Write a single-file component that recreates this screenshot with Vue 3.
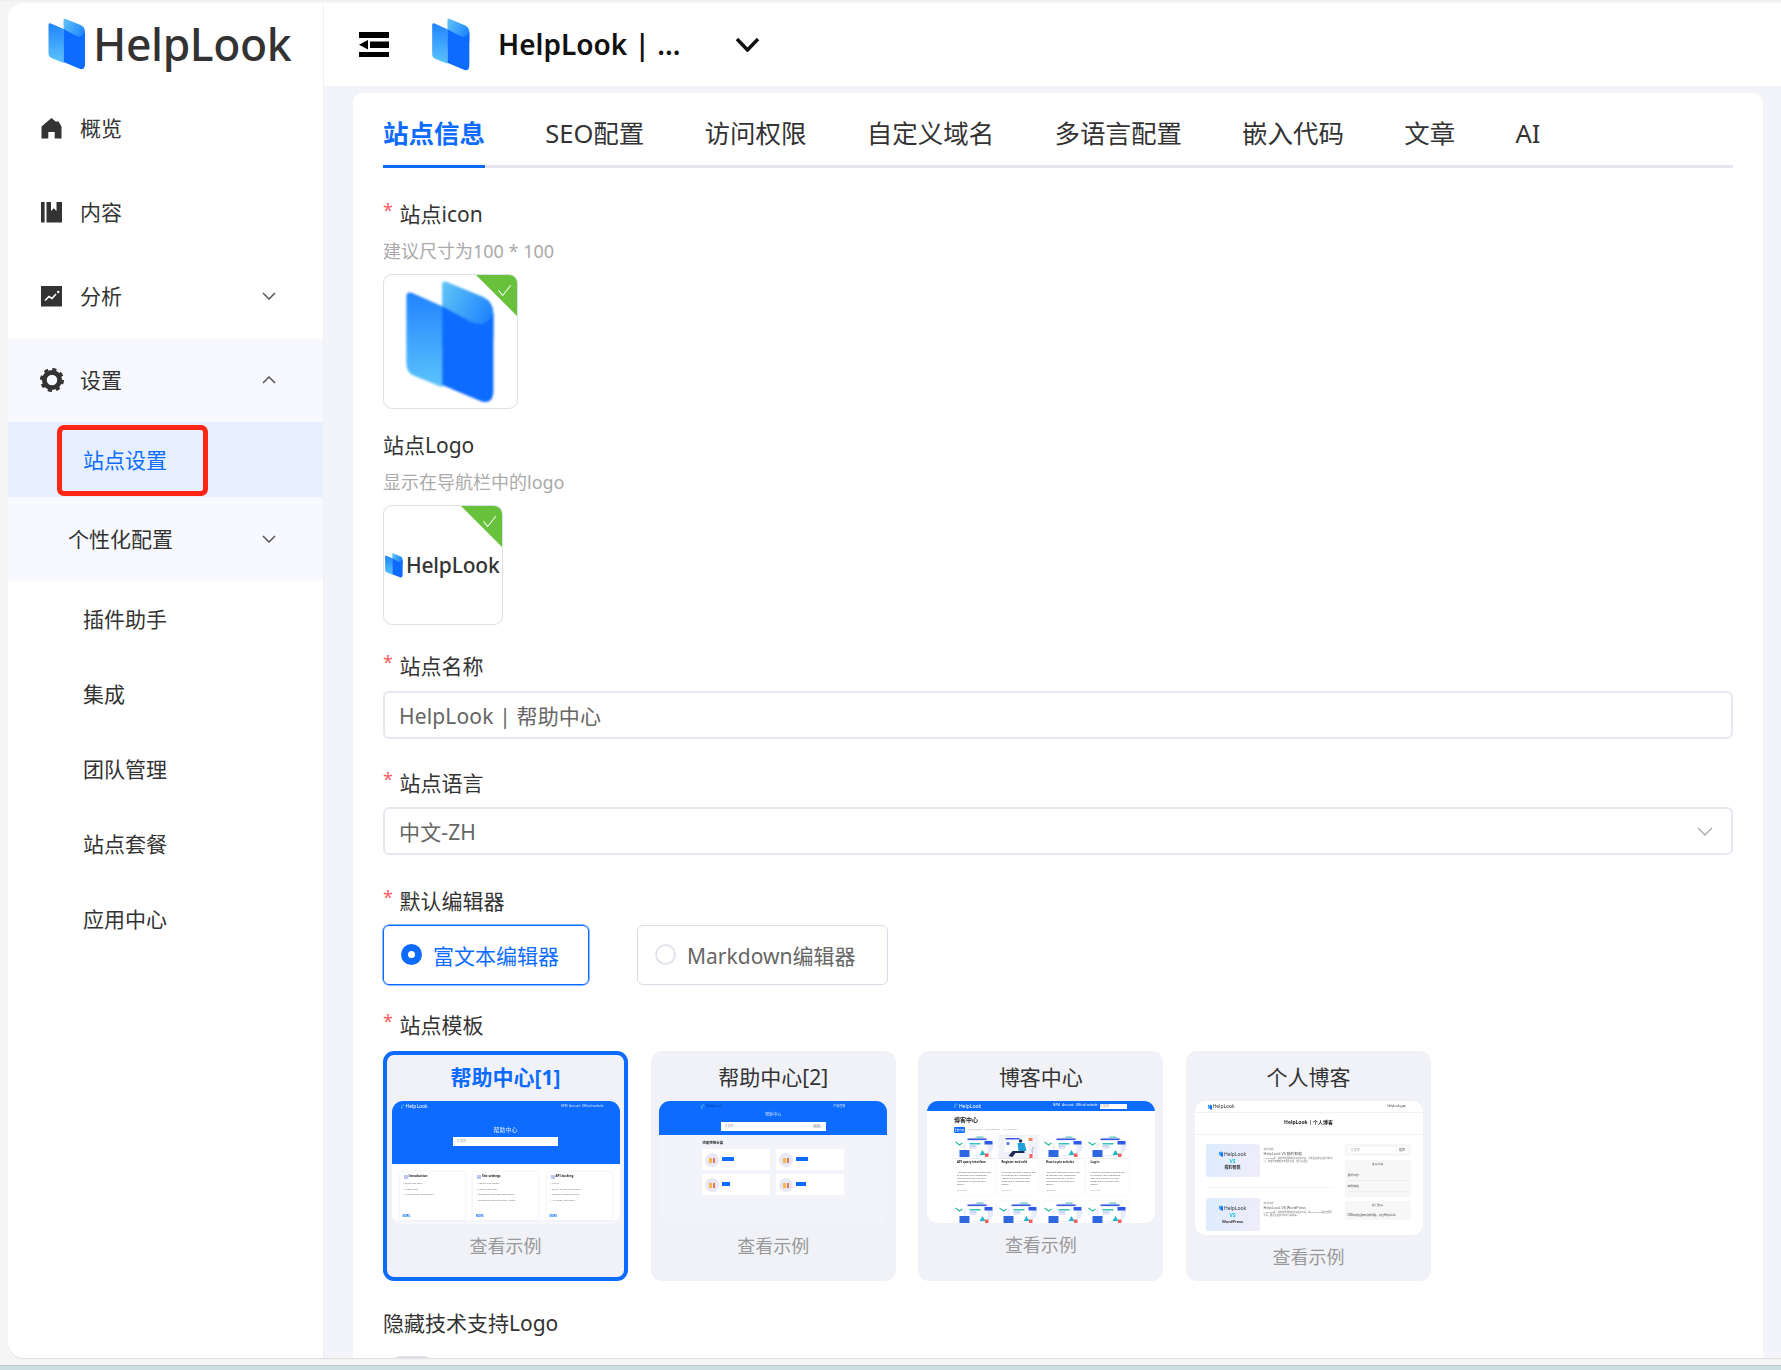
<template>
  <div class="page">
    <!-- shared logo mark -->
    <svg class="defs" width="0" height="0">
      <defs>
        <linearGradient id="hl-back" x1="0" y1="0" x2="1" y2="0.6">
          <stop offset="0" stop-color="#62c6f5" />
          <stop offset="1" stop-color="#1a80ff" />
        </linearGradient>
        <linearGradient id="hl-left" x1="0" y1="0" x2="0" y2="1">
          <stop offset="0" stop-color="#2183ff" />
          <stop offset="1" stop-color="#5cc4fa" />
        </linearGradient>
        <symbol id="hl-mark" viewBox="0 0 37 52">
          <path d="M15 2Q15 0 17.5 1L32 7Q36.500 9 36.500 14V24L15 28Z" fill="url(#hl-back)" />
          <path d="M0 7Q0 4.500 2.500 5.500L15 11V45L3 40Q0 38.800 0 35Z" fill="url(#hl-left)" />
          <path d="M15 11L26 17Q33 21 36.500 14V46Q36.500 53 30.500 50.500L15 44Z" fill="#0d6cff" />
        </symbol>
      </defs>
    </svg>

    <div class="window">
      <div class="app">
        <aside class="sidebar">
          <div class="brand">
            <svg class="brand-mark"><use href="#hl-mark" /></svg>
            <span class="brand-name">HelpLook</span>
          </div>

          <nav>
            <div class="menu-row">
              <svg class="menu-icon" viewBox="0 0 21 21"><path d="M10.500 0L14.500 3.600H17.500L20.500 8.500V20.500H13.700V14H7.300V20.500H.5V8.500Z" fill="#333" /></svg>
              <span>概览</span>
            </div>
            <div class="menu-row">
              <svg class="menu-icon" viewBox="0 0 21 21"><path d="M0 0H3.600V20.500H0ZM5.500 0H10V9L12.800 6.300L15.500 9V0H21V20.500H5.500Z" fill="#333" /></svg>
              <span>内容</span>
            </div>
            <div class="menu-row">
              <svg class="menu-icon" viewBox="0 0 21 21">
                <rect width="21" height="20.500" fill="#333" />
                <path d="M4 14.500L8 10.500L11 12.500L15 8" fill="none" stroke="#fff" stroke-width="1.600" />
                <circle cx="17.200" cy="6" r="1.200" fill="#fff" />
              </svg>
              <span>分析</span>
              <svg class="chevron" viewBox="0 0 14 8"><path d="M1 1L7 7L13 1" /></svg>
            </div>

            <div class="menu-open">
              <div class="menu-row">
                <svg class="menu-icon gear" viewBox="0 0 24 24">
                  <circle cx="12" cy="12" r="7.700" fill="none" stroke="#333" stroke-width="4.800" />
                  <circle cx="12" cy="12" r="10.700" fill="none" stroke="#333" stroke-width="2.600" stroke-dasharray="4.200 4.200" />
                </svg>
                <span>设置</span>
                <svg class="chevron" viewBox="0 0 14 8"><path d="M1 7L7 1L13 7" /></svg>
              </div>
              <div class="sub-row sub-active">
                站点设置
                <div class="annotation"></div>
              </div>
              <div class="menu-row sub-group">
                <span>个性化配置</span>
                <svg class="chevron" viewBox="0 0 14 8"><path d="M1 1L7 7L13 1" /></svg>
              </div>
            </div>

            <div v-for="item in subItems" :key="item" class="sub-row">{{ item }}</div>
          </nav>
        </aside>

        <div class="main">
          <header class="topbar">
            <svg class="hamburger" viewBox="0 0 30 25">
              <path d="M0 0H30V6H0ZM0 20H30V25H0ZM11 9.500H30V16H11ZM0 12.700L9 8V17.500Z" fill="#000" />
            </svg>
            <svg class="top-mark"><use href="#hl-mark" /></svg>
            <span class="site-title">HelpLook | ...</span>
            <svg class="site-chevron" viewBox="0 0 25 15"><path d="M2 2L12.500 13L23 2" /></svg>
          </header>

          <div class="content">
            <section class="card">
              <div class="tabs">
                <div
                  v-for="tab in tabs"
                  :key="tab"
                  class="tab"
                  :class="{ active: activeTab === tab }"
                  @click="activeTab = tab"
                >{{ tab }}</div>
              </div>

              <div class="field f-icon">
                <div class="label"><span class="req">*</span>站点icon</div>
                <div class="hint">建议尺寸为100 * 100</div>
                <div class="upload upload-icon">
                  <svg class="upload-mark"><use href="#hl-mark" /></svg>
                  <svg class="corner" viewBox="0 0 42 42">
                    <polygon points="0,0 42,0 42,42" fill="#67c13b" />
                    <polyline points="23,16 27,21 35,11" fill="none" stroke="#fff" stroke-width="1" />
                  </svg>
                </div>
              </div>

              <div class="field f-logo">
                <div class="label">站点Logo</div>
                <div class="hint">显示在导航栏中的logo</div>
                <div class="upload upload-logo">
                  <div class="logo-preview">
                    <svg class="logo-preview-mark"><use href="#hl-mark" /></svg>
                    <span>HelpLook</span>
                  </div>
                  <svg class="corner" viewBox="0 0 42 42">
                    <polygon points="0,0 42,0 42,42" fill="#67c13b" />
                    <polyline points="23,16 27,21 35,11" fill="none" stroke="#fff" stroke-width="1" />
                  </svg>
                </div>
              </div>

              <div class="field f-name">
                <div class="label gap-s"><span class="req">*</span>站点名称</div>
                <input v-model="siteName" class="text-input" type="text" />
              </div>

              <div class="field f-lang">
                <div class="label gap-xs"><span class="req">*</span>站点语言</div>
                <div class="text-input select">
                  <span>中文-ZH</span>
                  <svg viewBox="0 0 16 9"><path d="M1 1L8 8L15 1" /></svg>
                </div>
              </div>

              <div class="field f-editor">
                <div class="label gap-xs"><span class="req">*</span>默认编辑器</div>
                <div class="radios">
                  <div
                    v-for="ed in editors"
                    :key="ed.name"
                    class="radio"
                    :class="{ checked: editor === ed.name }"
                    :style="{ width: ed.width }"
                    @click="editor = ed.name"
                  >
                    <span class="dot"></span>
                    <span>{{ ed.name }}</span>
                  </div>
                </div>
              </div>

              <div class="field f-tpl">
                <div class="label gap"><span class="req">*</span>站点模板</div>
                <div class="templates">
                  <div
                    v-for="tpl in templates"
                    :key="tpl.name"
                    class="tpl"
                    :class="{ selected: template === tpl.name }"
                    @click="template = tpl.name"
                  >
                    <div class="tpl-title">{{ tpl.name }}</div>

                    <!-- 帮助中心[1] -->
                    <div v-if="tpl.kind === 'help1'" class="pv pv1">
                      <div class="pv1-hero">
                        <div class="pv-nav">
                          <span class="pv-brand white"><svg><use href="#hl-mark" /></svg>HelpLook</span>
                          <span class="pv-links">NPM&nbsp;&nbsp;Account&nbsp;&nbsp;Official website</span>
                        </div>
                        <div class="pv-hero-title">帮助中心</div>
                        <div class="pv-search">Q 搜索</div>
                      </div>
                      <div class="pv1-cards">
                        <div v-for="c in helpCards" :key="c.title" class="pv1-card">
                          <div class="pv1-card-title"><i></i>{{ c.title }}</div>
                          <div v-for="line in c.lines" :key="line" class="pv1-line">• {{ line }}</div>
                          <div class="pv1-more"><b>MORE</b> ›</div>
                        </div>
                      </div>
                    </div>

                    <!-- 帮助中心[2] -->
                    <div v-else-if="tpl.kind === 'help2'" class="pv pv2">
                      <div class="pv2-hero">
                        <div class="pv-nav pv2-nav">
                          <span class="pv-brand dark"><svg><use href="#hl-mark" /></svg>HelpLook</span>
                          <span class="pv-links">产品官网</span>
                        </div>
                        <div class="pv2-title">帮助中心</div>
                        <div class="pv-search pv2-search"><span>Q 搜索</span><em>搜索</em></div>
                      </div>
                      <div class="pv2-body">
                        <div class="pv2-head">功能特性分类</div>
                        <div class="pv2-grid">
                          <div v-for="(chip, i) in helpChips" :key="i" class="pv2-item">
                            <span class="pv2-circle"><i></i><i></i></span>
                            <span class="pv2-chip" :style="{ width: chip }"></span>
                          </div>
                        </div>
                      </div>
                    </div>

                    <!-- 博客中心 -->
                    <div v-else-if="tpl.kind === 'blog'" class="pv pv3">
                      <div class="pv3-nav">
                        <span class="pv-brand white"><svg><use href="#hl-mark" /></svg>HelpLook</span>
                        <span class="pv-links">NPM&nbsp;&nbsp;&nbsp;Account&nbsp;&nbsp;&nbsp;Official website</span>
                        <span class="pv3-search">Q 搜索</span>
                      </div>
                      <div class="pv3-title">博客中心</div>
                      <div class="pv3-chips"><b>全部内容</b><span>Introduction</span><span>Site settings</span><span>API docking</span></div>
                      <div class="pv3-grid">
                        <div v-for="post in blogPosts" :key="post.id" class="pv3-post">
                          <svg v-if="post.person" class="pv3-art" viewBox="0 0 40 24">
                            <rect width="40" height="24" fill="#f1f2f9" />
                            <rect x="6" y="2" width="24" height="15" fill="#fff" />
                            <rect x="7" y="3" width="14" height="1.500" fill="#3a55e0" />
                            <rect x="8" y="7" width="3" height="3" fill="#5f7fe8" />
                            <rect x="30" y="3" width="4" height="3" fill="#f58a6a" />
                            <circle cx="22" cy="6" r="1.800" fill="#26324f" />
                            <path d="M19 8H26L28 16H20Z" fill="#1f9fd8" />
                            <path d="M10 21L14 16H26V18H17L14 22Z" fill="#1d2a52" />
                            <rect x="31" y="19" width="3" height="4" fill="#f0605a" />
                            <path d="M34 19V12M34 15L36 12M34 17L32 14" stroke="#b9c3dc" stroke-width=".8" fill="none" />
                            <rect y="23.500" width="40" height=".5" fill="#ddd" />
                          </svg>
                          <svg v-else class="pv3-art" viewBox="0 0 40 24">
                            <ellipse cx="24" cy="11.500" rx="15" ry="10" fill="#e8ebfb" />
                            <rect x="11" y="5" width="22" height="15" fill="#fff" />
                            <rect x="13" y="3.500" width="19" height="1.600" fill="#3a55e0" />
                            <rect x="22" y="1.500" width="7" height="1.200" fill="#5ccdb5" />
                            <rect x="30" y="6" width="8" height="3.500" fill="#2b59e8" />
                            <rect x="15" y="8" width="11" height="1.500" fill="#35c4b5" />
                            <rect x="15" y="10.500" width="7" height="1" fill="#9db0ee" />
                            <rect x="15" y="12.500" width="7" height="1" fill="#c5cdf2" />
                            <rect x="5" y="15" width="10" height="7" fill="#2f67e0" />
                            <path d="M1 7L5 10L8 8" fill="none" stroke="#2bbfa0" stroke-width="1.200" />
                            <path d="M25 20L28 15L31 20Z" fill="#22b8c8" />
                            <rect x="30.500" y="18.500" width="3.500" height="3.500" fill="#f0605a" />
                            <rect y="23.500" width="40" height=".5" fill="#ddd" />
                          </svg>
                          <template v-if="post.title">
                            <div class="pv3-post-title">{{ post.title }}</div>
                            <div class="pv3-post-text">{{ post.text }}</div>
                            <div class="pv3-post-foot">Read more</div>
                          </template>
                        </div>
                      </div>
                    </div>

                    <!-- 个人博客 -->
                    <div v-else class="pv pv4">
                      <div class="pv4-nav">
                        <span class="pv-brand dark"><svg><use href="#hl-mark" /></svg>HelpLook</span>
                        <span class="pv4-link">HelpLook官网</span>
                      </div>
                      <div class="pv4-title">HelpLook | 个人博客</div>
                      <div class="pv4-body">
                        <div class="pv4-list">
                          <div v-for="a in articles" :key="a.title" class="pv4-article">
                            <div class="pv4-cover">
                              <span class="pv-brand dark"><svg><use href="#hl-mark" /></svg>HelpLook</span>
                              <b>VS</b>
                              <span class="pv4-rival">{{ a.rival }}</span>
                            </div>
                            <div class="pv4-text">
                              <small>最新动态</small>
                              <strong>{{ a.title }}</strong>
                              <p>{{ a.text }}</p>
                            </div>
                          </div>
                        </div>
                        <div class="pv4-side">
                          <div class="pv4-box pv4-searchbox"><span>Q 搜索</span><em>搜索</em></div>
                          <div class="pv4-box pv4-cats">
                            <div class="pv4-box-title">文章分类</div>
                            <div class="pv4-row">最新动态</div>
                            <div class="pv4-row">使用教程</div>
                          </div>
                          <div class="pv4-box">
                            <div class="pv4-box-title">热门文章</div>
                            <div class="pv4-hot">CMS系统搭建知识库网站，对比HelpLook</div>
                          </div>
                        </div>
                      </div>
                    </div>

                    <div class="tpl-link">查看示例</div>
                  </div>
                </div>
              </div>

              <div class="field f-hide">
                <div class="label">隐藏技术支持Logo</div>
                <div class="switch"></div>
              </div>
            </section>
          </div>
        </div>
      </div>
    </div>
  </div>
</template>

<script setup>
import { ref } from 'vue';

const tabs = ['站点信息', 'SEO配置', '访问权限', '自定义域名', '多语言配置', '嵌入代码', '文章', 'AI'];
const activeTab = ref('站点信息');

const subItems = ['插件助手', '集成', '团队管理', '站点套餐', '应用中心'];

const siteName = ref('HelpLook | 帮助中心');

const editors = [
  { name: '富文本编辑器', width: '206px' },
  { name: 'Markdown编辑器', width: '251px' },
];
const editor = ref('富文本编辑器');

const templates = [
  { name: '帮助中心[1]', kind: 'help1' },
  { name: '帮助中心[2]', kind: 'help2' },
  { name: '博客中心', kind: 'blog' },
  { name: '个人博客', kind: 'personal' },
];
const template = ref('帮助中心[1]');

const helpCards = [
  { title: 'Introduction', lines: ['Quick get start', 'Create Site', 'Viewing Site information'] },
  { title: 'Site settings', lines: ['Modify the theme', 'Modify site icon', 'Configure the SEO information', 'Configure social sidebar / more'] },
  { title: 'API docking', lines: ['Log in', 'Query article list & more', 'Register article & more', 'API query interface'] },
];

const helpChips = ['12px', '12px', '8px', '10px'];

const bodyText = 'HelpLook provides a simple way to manage your knowledge base and publish it to your customers in minutes with search.';
// second row of the grid is cut off by the thumbnail, only its pictures show
const blogPosts = [
  { id: 1, title: 'API query interface', text: bodyText },
  { id: 2, title: 'Register and edit', text: bodyText, person: true },
  { id: 3, title: 'How to pin articles', text: bodyText },
  { id: 4, title: 'Log in', text: bodyText },
  { id: 5 },
  { id: 6 },
  { id: 7 },
  { id: 8 },
];

const articles = [
  {
    title: 'HelpLook VS 猎豹智能',
    rival: '猎豹智能',
    text: 'HelpLook是一款简单易用的知识库搭建工具，帮助企业快速搭建帮助中心，和猎豹智能相比有更多模板，支持多语言。',
  },
  {
    title: 'HelpLook VS WordPress',
    rival: 'WordPress',
    text: 'HelpLook是一款简单易用的知识库搭建工具，和WordPress相比无需写代码，更适合搭建帮助中心和博客。',
  },
];
</script>

<style scoped>
.page {
  width: 1781px;
  height: 1370px;
  background: #cfdde4;
  overflow: hidden;
  font-family: "Noto Sans", "Noto Sans CJK SC", sans-serif;
  color: #333;
}

.defs {
  position: absolute;
}

.window {
  height: 1366px;
  box-sizing: border-box;
  padding: 2px 0 7px 8px;
  background: #f5f5f5;
  border-top: 1px solid #eee;
  border-bottom: 1px solid #b9c7cf;
}

.app {
  display: flex;
  height: 100%;
  background: #fff;
  border-radius: 16px 0 0 16px;
  overflow: hidden;
  box-shadow: 0 1px 1px #ddd;
}

/* sidebar */
.sidebar {
  width: 316px;
  flex-shrink: 0;
  border-right: 1px solid #f1f1f4;
  box-sizing: border-box;
  background: #fff;
}

.brand {
  height: 83px;
  display: flex;
  align-items: center;
  padding-left: 40px;
  gap: 7px;
}

.brand-mark {
  width: 38px;
  height: 52px;
  margin-top: -2px;
}

.brand-name {
  font-size: 44.500px;
  font-weight: 500;
  letter-spacing: -0.4px;
  color: #333;
  margin-top: -2px;
}

.menu-row {
  height: 84px;
  display: flex;
  align-items: center;
  padding: 0 47px 0 33px;
  font-size: 21px;
}

.menu-row span {
  margin-bottom: 2px;
}

.menu-icon {
  width: 21px;
  height: 21px;
  margin-right: 18px;
  flex-shrink: 0;
}

.menu-icon.gear {
  width: 24px;
  height: 24px;
  margin: 0 16.500px 0 -1.500px;
}

.chevron {
  width: 14px;
  height: 8px;
  margin-left: auto;
}

.chevron path {
  fill: none;
  stroke: #555;
  stroke-width: 1.5;
}

.menu-open {
  background: #f8f9fe;
}

.sub-group {
  padding-left: 60px;
}

.sub-row {
  height: 75px;
  box-sizing: border-box;
  display: flex;
  align-items: center;
  padding: 0 0 2px 75px;
  font-size: 21px;
  position: relative;
}

.sub-active {
  background: #e6effd;
  color: #0d6cff;
}

.annotation {
  position: absolute;
  left: 49px;
  top: 3px;
  width: 151px;
  height: 71px;
  box-sizing: border-box;
  border: 5px solid #ff2416;
  border-radius: 7px;
}

/* top bar */
.main {
  flex: 1;
  min-width: 0;
  display: flex;
  flex-direction: column;
  background: #f3f4f9;
}

.topbar {
  height: 83px;
  flex-shrink: 0;
  display: flex;
  align-items: center;
  padding-left: 35px;
  background: #fff;
}

.hamburger {
  width: 30px;
  height: 25px;
  margin-right: 43px;
}

.top-mark {
  width: 38px;
  height: 53px;
  margin-right: 28px;
}

.site-title {
  width: 237px;
  font-size: 28px;
  font-weight: 600;
  color: #111;
  margin-bottom: 2px;
}

.site-chevron {
  width: 25px;
  height: 15px;
}

.site-chevron path {
  fill: none;
  stroke: #111;
  stroke-width: 3.5;
}

/* card */
.content {
  flex: 1;
  min-height: 0;
  padding: 7px 18px 0 29px;
}

.card {
  height: 100%;
  box-sizing: border-box;
  padding: 0 30px;
  background: #fff;
  border-radius: 10px 10px 0 0;
  overflow: hidden;
}

.tabs {
  display: flex;
  gap: 60.200px;
  border-bottom: 3px solid #e3e6ef;
}

.tab {
  padding-top: 10px;
  margin-bottom: -3px;
  border-bottom: 3px solid transparent;
  height: 62px;
  line-height: 61px;
  font-size: 25.500px;
  cursor: pointer;
}

.tab.active {
  color: #0d6cff;
  font-weight: 700;
  border-bottom-color: #0d6cff;
}

/* form */
.label {
  display: flex;
  height: 30px;
  line-height: 30px;
  font-size: 21px;
  color: #333;
}

.label.gap {
  margin-bottom: 11px;
}

.label.gap-s {
  margin-bottom: 10px;
}

.label.gap-xs {
  margin-bottom: 9px;
}

.req {
  width: 16.500px;
  color: #ff5d5d;
  font-size: 18px;
  line-height: 22px;
}

.hint {
  height: 45px;
  line-height: 44px;
  font-size: 18px;
  color: #aaa;
}

.f-icon {
  margin-top: 31px;
}

.f-logo {
  margin-top: 21px;
}

.f-name {
  margin-top: 26px;
}

.f-lang {
  margin-top: 29px;
}

.f-editor {
  margin-top: 31px;
}

.f-tpl {
  margin-top: 25px;
}

.f-hide {
  margin-top: 27px;
}

.upload {
  position: relative;
  box-sizing: border-box;
  border: 1px solid #dcdfe8;
  border-radius: 9px;
  overflow: hidden;
}

.upload-icon {
  width: 135px;
  height: 135px;
  display: flex;
  align-items: center;
  justify-content: center;
}

.upload-mark {
  width: 89px;
  height: 124px;
  filter: blur(1px);
}

.upload-logo {
  width: 120px;
  height: 120px;
  display: flex;
  align-items: center;
}

.logo-preview {
  display: flex;
  align-items: center;
  gap: 3px;
  padding-left: 1px;
  font-size: 21px;
  font-weight: 500;
  letter-spacing: -0.2px;
  color: #333;
  white-space: nowrap;
}

.logo-preview-mark {
  width: 18px;
  height: 25px;
}

.corner {
  position: absolute;
  top: -1px;
  right: -1px;
  width: 43px;
  height: 43px;
}

.text-input {
  display: block;
  width: 100%;
  height: 48px;
  box-sizing: border-box;
  border: 2px solid #e6e8f0;
  border-radius: 6px;
  padding: 0 14px;
  font-family: inherit;
  font-size: 21px;
  letter-spacing: 0.150px;
  color: #666;
  background: #fff;
  outline: none;
}

.select {
  display: flex;
  align-items: center;
  justify-content: space-between;
}

.select svg {
  width: 16px;
  height: 9px;
  margin-right: 4px;
}

.select path {
  fill: none;
  stroke: #aaa;
  stroke-width: 1.4;
}

.radios {
  display: flex;
  gap: 48px;
}

.radio {
  height: 60px;
  box-sizing: border-box;
  display: flex;
  align-items: center;
  gap: 11px;
  padding-left: 17px;
  padding-bottom: 1px;
  border: 1px solid #d9dce6;
  border-radius: 6px;
  font-size: 21px;
  color: #666;
  cursor: pointer;
}

.radio.checked {
  border-color: #0d6cff;
  box-shadow: 0 0 0 0.5px #0d6cff;
  color: #0d6cff;
}

.dot {
  width: 21px;
  height: 21px;
  box-sizing: border-box;
  border: 2px solid #e2e4ec;
  border-radius: 50%;
  background: #fff;
}

.radio.checked .dot {
  border: 7px solid #0d6cff;
}

/* template cards */
.templates {
  display: flex;
  gap: 22.700px;
}

.tpl {
  width: 245px;
  height: 230px;
  box-sizing: border-box;
  border: 4px solid #f0f2f7;
  border-radius: 11px;
  background: #f0f2f7;
  cursor: pointer;
}

.tpl.selected {
  border-color: #0d6cff;
}

.tpl-title {
  height: 46px;
  line-height: 44px;
  text-align: center;
  font-size: 21px;
  color: #333;
}

.tpl.selected .tpl-title {
  color: #0d6cff;
  font-weight: 700;
}

.tpl-link {
  height: 44px;
  line-height: 44px;
  text-align: center;
  font-size: 18px;
  color: #999;
}

.switch {
  width: 46px;
  height: 24px;
  margin: 18px 0 0 6px;
  border-radius: 12px;
  background: #dcdfe6;
}

/* template thumbnails */
.pv {
  width: 228px;
  margin: 0 auto;
  border-radius: 11px;
  overflow: hidden;
  font-size: 3px;
  line-height: 1.3;
  white-space: nowrap;
  color: #555;
  filter: blur(0.3px);
}

.pv-brand {
  display: inline-flex;
  align-items: center;
  gap: 1px;
  font-size: 5px;
}

.pv-brand svg {
  width: 4px;
  height: 6px;
}

.pv-brand.white {
  color: #fff;
}

.pv-brand.dark {
  color: #333;
}

.pv-links {
  color: #d6e4ff;
  font-size: 3px;
}

.pv-nav {
  display: flex;
  justify-content: space-between;
  align-items: center;
  height: 11px;
  padding: 0 16px 0 9px;
}

.pv-search {
  width: 105px;
  height: 9px;
  margin: 0 auto;
  padding-left: 4px;
  box-sizing: border-box;
  background: #fff;
  line-height: 9px;
  color: #aaa;
}

.pv-hero-title {
  margin-top: 13px;
  margin-bottom: 2px;
  text-align: center;
  font-size: 6px;
  line-height: 10px;
  color: #d8e6ff;
}

.pv1 {
  height: 123px;
  background: #f6f8fc;
}

.pv1-hero {
  height: 63px;
  background: #0d6cff;
}

.pv1-cards {
  display: flex;
  justify-content: space-between;
  height: 60px;
  box-sizing: border-box;
  padding: 8px 8px 0;
  background: linear-gradient(#fff 56px, #f6f8fc 56px);
}

.pv1-card {
  position: relative;
  width: 65px;
  height: 48px;
  padding: 3px 4px;
  box-sizing: border-box;
  background: #fff;
  box-shadow: 0 0 2px #dfe3ec;
}

.pv1-card-title {
  display: flex;
  align-items: center;
  gap: 1px;
  margin-bottom: 2px;
  font-size: 3px;
  font-weight: 700;
  color: #222;
}

.pv1-card-title i {
  width: 4px;
  height: 4px;
  background: #b7c8f5;
}

.pv1-line {
  height: 5.500px;
  line-height: 5.500px;
  font-size: 2.500px;
  color: #777;
}

.pv1-more {
  position: absolute;
  left: 3px;
  bottom: 2px;
  font-size: 2.500px;
  color: #0d6cff;
}

.pv2 {
  height: 123px;
  background: #f2f4f9;
}

.pv2-hero {
  height: 34px;
  background: #0d6cff;
}

.pv2-nav {
  padding: 0 42px;
}

.pv2-nav .pv-brand {
  font-size: 3.500px;
  color: #063c96;
}

.pv2-title {
  height: 10px;
  text-align: center;
  font-size: 4px;
  line-height: 10px;
  color: #cfe0ff;
  margin-top: -2px;
}

.pv2-search {
  display: flex;
  justify-content: space-between;
  align-items: center;
  margin-top: 2px;
  padding-right: 5px;
  line-height: 1;
}

.pv2-search em {
  padding: 0 1px;
  font-style: normal;
  background: #d9dce3;
}

.pv2-body {
  padding: 6px 43px 0;
}

.pv2-head {
  height: 8px;
  font-size: 3.500px;
  font-weight: 700;
  color: #222;
}

.pv2-grid {
  display: grid;
  grid-template-columns: 68px 68px;
  gap: 4px 6px;
}

.pv2-item {
  height: 21px;
  display: flex;
  align-items: flex-start;
  gap: 3px;
  padding: 4px 3px;
  box-sizing: border-box;
  background: #fff;
}

.pv2-circle {
  width: 14px;
  height: 14px;
  display: flex;
  align-items: center;
  justify-content: center;
  gap: 1px;
  border-radius: 50%;
  background: #e7e8f3;
}

.pv2-circle i {
  width: 3px;
  height: 5px;
  background: #f0b94e;
}

.pv2-circle i + i {
  background: #e9735a;
  width: 2px;
}

.pv2-chip {
  height: 4px;
  margin-top: 4px;
  background: #0d6cff;
}

.pv3 {
  height: 122px;
  background: #fff;
}

.pv3-nav {
  display: flex;
  align-items: center;
  height: 10px;
  padding-left: 27px;
  background: #0d6cff;
}

.pv3-nav .pv-links {
  margin-left: 72px;
  color: #fff;
}

.pv3-search {
  width: 27px;
  height: 5px;
  margin-left: auto;
  margin-right: 28px;
  background: #fff;
  color: #aaa;
  line-height: 5px;
}

.pv3-title {
  padding: 4px 27px 0;
  font-size: 6px;
  line-height: 10px;
  font-weight: 700;
  color: #222;
}

.pv3-chips {
  display: flex;
  align-items: center;
  gap: 3px;
  height: 6px;
  margin: 2px 0 2px;
  padding-left: 27px;
  font-size: 2.500px;
  color: #999;
}

.pv3-chips b {
  width: 11px;
  height: 6px;
  line-height: 6px;
  border-radius: 1px;
  text-align: center;
  font-weight: 400;
  color: #fff;
  background: #0d6cff;
}

.pv3-grid {
  display: grid;
  grid-template-columns: repeat(4, 41px);
  column-gap: 3.500px;
  row-gap: 6px;
  padding-left: 27px;
}

.pv3-post {
  height: 60px;
  background: #fff;
  box-shadow: 0 0 2px #eceef4;
  white-space: normal;
}

.pv3-art {
  display: block;
  width: 41px;
  height: 24px;
}

.pv3-post-title {
  height: 8px;
  padding: 2px 3px 0;
  font-size: 3px;
  font-weight: 700;
  color: #222;
}

.pv3-post-text {
  height: 19px;
  padding: 2px 3px 0;
  font-size: 2.300px;
  line-height: 3px;
  color: #666;
}

.pv3-post-foot {
  padding: 0 3px;
  font-size: 2px;
  color: #aaa;
}

.pv4 {
  height: 134px;
  background: #fff;
}

.pv4-nav {
  display: flex;
  justify-content: space-between;
  align-items: center;
  height: 11px;
  padding: 0 17px 0 13px;
  border-bottom: 1px solid #f1f2f6;
}

.pv4-link {
  font-size: 2.800px;
  color: #333;
}

.pv4-title {
  height: 21px;
  line-height: 19px;
  text-align: center;
  font-size: 5px;
  font-weight: 700;
  color: #222;
  border-bottom: 1px solid #f1f2f6;
}

.pv4-body {
  display: flex;
  gap: 11px;
  padding: 9px 7px 0 11px;
}

.pv4-list {
  width: 128px;
}

.pv4-article {
  display: flex;
  gap: 4px;
  height: 33px;
  padding-bottom: 10px;
  margin-bottom: 10px;
  border-bottom: 1px solid #f3f4f7;
  white-space: normal;
}

.pv4-cover {
  width: 54px;
  height: 33px;
  flex-shrink: 0;
  display: flex;
  flex-direction: column;
  align-items: center;
  justify-content: center;
  gap: 1px;
  border-radius: 2px;
  background: linear-gradient(100deg, #dcecfd, #f0ecfa);
  white-space: nowrap;
}

.pv4-cover b {
  font-size: 5px;
  line-height: 6px;
  color: #12c2d8;
}

.pv4-rival {
  font-size: 4px;
  font-weight: 700;
  color: #333;
}

.pv4-text {
  min-width: 0;
  padding-top: 4px;
}

.pv4-text small {
  display: block;
  font-size: 2.500px;
  color: #888;
}

.pv4-text strong {
  display: block;
  margin: 1px 0;
  font-size: 3.800px;
  font-weight: 400;
  color: #555;
  white-space: nowrap;
}

.pv4-text p {
  margin: 0;
  font-size: 2.200px;
  color: #777;
}

.pv4-side {
  width: 66px;
  flex-shrink: 0;
}

.pv4-box {
  margin-bottom: 4px;
  padding: 3px;
  box-sizing: border-box;
  background: #f7f7f7;
  white-space: normal;
}

.pv4-searchbox {
  height: 12px;
  display: flex;
  justify-content: space-between;
  gap: 2px;
  white-space: nowrap;
}

.pv4-searchbox span {
  flex: 1;
  padding-left: 3px;
  line-height: 6px;
  background: #fff;
  color: #aaa;
}

.pv4-searchbox em {
  width: 11px;
  line-height: 6px;
  text-align: center;
  font-style: normal;
  background: #fff;
}

.pv4-cats {
  height: 37px;
}

.pv4-box-title {
  height: 7px;
  text-align: center;
  font-size: 2.800px;
  color: #555;
}

.pv4-row {
  height: 9px;
  line-height: 8px;
  margin-top: 1px;
  border-bottom: 1px solid #eee;
  font-size: 2.800px;
  color: #555;
}

.pv4-hot {
  margin-top: 3px;
  font-size: 2.600px;
  color: #444;
}
</style>

<style>
body {
  margin: 0;
}
</style>
